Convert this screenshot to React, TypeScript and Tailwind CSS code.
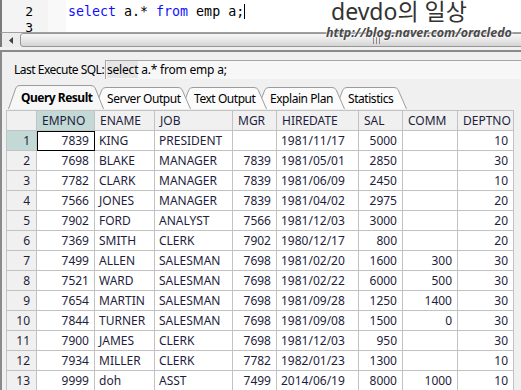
import React from 'react';

const rows: string[][] = [
  ['1', '7839', 'KING', 'PRESIDENT', '', '1981/11/17', '5000', '', '10'],
  ['2', '7698', 'BLAKE', 'MANAGER', '7839', '1981/05/01', '2850', '', '30'],
  ['3', '7782', 'CLARK', 'MANAGER', '7839', '1981/06/09', '2450', '', '10'],
  ['4', '7566', 'JONES', 'MANAGER', '7839', '1981/04/02', '2975', '', '20'],
  ['5', '7902', 'FORD', 'ANALYST', '7566', '1981/12/03', '3000', '', '20'],
  ['6', '7369', 'SMITH', 'CLERK', '7902', '1980/12/17', '800', '', '20'],
  ['7', '7499', 'ALLEN', 'SALESMAN', '7698', '1981/02/20', '1600', '300', '30'],
  ['8', '7521', 'WARD', 'SALESMAN', '7698', '1981/02/22', '6000', '500', '30'],
  ['9', '7654', 'MARTIN', 'SALESMAN', '7698', '1981/09/28', '1250', '1400', '30'],
  ['10', '7844', 'TURNER', 'SALESMAN', '7698', '1981/09/08', '1500', '0', '30'],
  ['11', '7900', 'JAMES', 'CLERK', '7698', '1981/12/03', '950', '', '30'],
  ['12', '7934', 'MILLER', 'CLERK', '7782', '1982/01/23', '1300', '', '10'],
  ['13', '9999', 'doh', 'ASST', '7499', '2014/06/19', '8000', '1000', '10'],
];

const headers = ['EMPNO', 'ENAME', 'JOB', 'MGR', 'HIREDATE', 'SAL', 'COMM', 'DEPTNO'];
const numeric = [true, false, false, true, false, true, true, true];

const tabs = [
  { label: 'Query Result', w: 96, z: 'z-50', active: true },
  { label: 'Server Output', w: 97, z: 'z-40', active: false },
  { label: 'Text Output', w: 86, z: 'z-30', active: false },
  { label: 'Explain Plan', w: 88, z: 'z-20', active: false },
  { label: 'Statistics', w: 72, z: 'z-10', active: false },
];

const TabShape: React.FC<{ w: number; h: number; active: boolean }> = ({ w, h, active }) => (
  <svg className="absolute inset-0" width={w} height={h} viewBox={`0 0 ${w} ${h}`}>
    <path
      d={`M0.5 ${h} L8 2.5 Q9.5 0.5 12 0.5 L${w - 13} 0.5 Q${w - 10.5} 0.5 ${w - 9} 2.5 L${w - 0.5} ${h}`}
      fill={active ? '#f7f7f7' : '#fbfbfb'}
      stroke="#9c9c9c"
    />
  </svg>
);

const App: React.FC = () => {
  return (
    <div
      className="relative w-[521px] h-[390px] overflow-hidden bg-[#f0f0f0] text-[#1e1e3c]"
      style={{ fontFamily: '"Noto Sans", "Noto Sans CJK KR", sans-serif' }}
    >
      {/* editor */}
      <div className="flex h-[32px] border-l-2 border-[#7a7a7a] overflow-hidden bg-white">
        <div className="w-[46px] bg-[#f4f4f4] pl-[3px]">
          <div className="-mt-[12px] font-['DejaVu_Sans_Mono',monospace] text-[13px] leading-[16px] text-black">
            <div className="w-[28px] text-right">1</div>
            <div className="w-[28px] text-right">2</div>
            <div className="w-[28px] text-right">3</div>
          </div>
        </div>
        <div className="w-[18px] bg-[#f9f9f9]" />
        <div className="flex-1 pl-[2px]">
          <div className="-mt-[12px] font-['DejaVu_Sans_Mono',monospace] text-[13.3px] leading-[16px] whitespace-pre">
            <div>&nbsp;</div>
            <div className="text-black">
              <span className="text-[#1010ff]">select</span> a.* <span className="text-[#1010ff]">from</span> emp a;
              <span className="inline-block w-[1px] h-[15px] bg-black align-middle -mt-[2px]" />
            </div>
            <div>&nbsp;</div>
          </div>
        </div>
      </div>

      {/* horizontal scrollbar */}
      <div className="flex h-[15px] border-l-2 border-[#7a7a7a] bg-[#ececec] border-t border-t-[#a0a0a0]">
        <div className="w-[18px] flex items-center justify-center">
          <svg width="5" height="7" viewBox="0 0 5 7">
            <path d="M4 0 L0 3.5 L4 7 Z" fill="#404040" />
          </svg>
        </div>
        <div className="flex-1 rounded-l-[3px] border border-[#979797] bg-gradient-to-b from-[#f7f7f7] via-[#e8e8e8] to-[#d4d4d4] mr-[-4px] flex items-center">
          <div className="ml-[352px] flex gap-[2px]">
            <div className="w-[1px] h-[7px] bg-[#8a8a8a]" />
            <div className="w-[1px] h-[7px] bg-[#8a8a8a]" />
            <div className="w-[1px] h-[7px] bg-[#8a8a8a]" />
          </div>
        </div>
      </div>

      <div className="h-[3px]" />

      {/* result panel */}
      <div className="border-t-2 border-l-2 border-[#8a8a8a] h-[342px] flex flex-col">
        <div className="flex items-center h-[31px] pt-[4px] pl-[12px] text-[12px] text-black">
          <span className="w-[91px] whitespace-nowrap tracking-[-0.5px]">Last Execute SQL:</span>
          <div className="flex-1 h-[19px] border-t border-l border-[#a6a6a6] bg-[#f7f7f7] leading-[18px] pl-[1px] whitespace-nowrap tracking-[-0.2px]">
            <span className="bg-[#e6e6e6]">select</span> a.* from emp a;
          </div>
        </div>

        {/* tabs */}
        <div className="flex items-end h-[26px] pl-[6px] text-[12px] text-black">
          {tabs.map((t, i) => (
            <div
              key={t.label}
              className={`relative shrink-0 ${t.z} ${i === 0 ? '' : '-ml-[10px]'} ${t.active ? 'h-[24px]' : 'h-[22px]'}`}
              style={{ width: t.w }}
            >
              <TabShape w={t.w} h={t.active ? 24 : 22} active={t.active} />
              <span
                className={`relative block whitespace-nowrap pl-[13px] ${t.active ? 'font-bold leading-[25px] tracking-[-0.5px]' : 'leading-[23px] tracking-[-0.45px]'}`}
              >
                {t.label}
              </span>
            </div>
          ))}
        </div>

        {/* grid */}
        <div className="flex-1 pl-[4px] pt-[1px]">
          <div className="w-[508px] border-t border-l border-[#c2c2c2] grid grid-cols-[30px_58px_60px_78px_44px_82px_44px_55px_56px] text-[12px] leading-[19px]">
            <div className="h-[20px] bg-[#f0f0f0] border-r border-b border-[#c2c2c2]" />
            {headers.map((h, i) => (
              <div
                key={h}
                className={`h-[20px] border-r border-b border-[#c2c2c2] pl-[5px] ${i === 0 ? 'bg-[#c3d9d5]' : 'bg-[#f0f0f0]'}`}
              >
                {h}
              </div>
            ))}
            {rows.map((r) => (
              <React.Fragment key={r[0]}>
                <div
                  className={`h-[20px] border-r border-b border-[#c2c2c2] text-right pr-[6px] ${r[0] === '1' ? 'bg-[#c3d9d5]' : 'bg-[#f0f0f0]'}`}
                >
                  {r[0]}
                </div>
                {r.slice(1).map((c, i) => (
                  <div
                    key={i}
                    className={`h-[20px] border-r border-b border-[#c2c2c2] bg-white whitespace-nowrap overflow-hidden ${numeric[i] ? 'text-right pr-[5px]' : 'pl-[4px]'} ${r[0] === '1' && i === 0 ? 'outline outline-1 -outline-offset-1 outline-black' : ''}`}
                  >
                    {c}
                  </div>
                ))}
              </React.Fragment>
            ))}
          </div>
        </div>
      </div>

      {/* blog watermark */}
      <div className="absolute left-[331px] -top-[6px] text-[23px] text-[#333333] [text-shadow:0_0_2px_#fff,0_0_2px_#fff]">
        devdo의 일상
      </div>
      <div className="absolute left-[326px] top-[24px] text-[12.5px] font-bold italic text-[#4a4a4a] [text-shadow:0_0_2px_#fff,0_0_2px_#fff]">
        http://blog.naver.com/oracledo
      </div>
    </div>
  );
};

export default App;
